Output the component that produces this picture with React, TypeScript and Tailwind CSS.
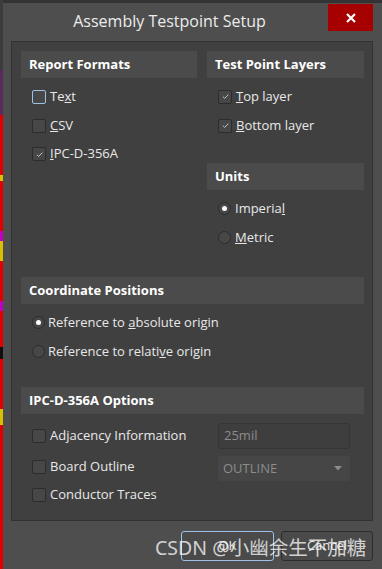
import React from "react";

const font = { fontFamily: '"Open Sans", "Noto Sans", "Noto Sans CJK SC", sans-serif' };

function Check({ checked, focus }: { checked?: boolean; focus?: boolean }) {
  return (
    <div
      className={`w-[14px] h-[14px] rounded-[2px] bg-[#474747] border flex items-center justify-center shrink-0 ${
        focus ? "border-[#9cc3e6]" : "border-[#2c2c2c]"
      }`}
    >
      {checked && (
        <svg width="9" height="9" viewBox="0 0 9 9">
          <path d="M1.8 4.6 L3.7 6.4 L7.4 2.6" stroke="#c4c4c4" strokeWidth="1" fill="none" />
        </svg>
      )}
    </div>
  );
}

function Radio({ on }: { on?: boolean }) {
  return (
    <div className="w-[13px] h-[13px] rounded-full bg-[#474747] border border-[#2c2c2c] flex items-center justify-center shrink-0">
      {on && <div className="w-[5px] h-[5px] rounded-full bg-white" />}
    </div>
  );
}

function Header({ children }: { children: React.ReactNode }) {
  return (
    <div className="h-[27px] bg-[#4b4b4b] flex items-center pl-[8px] text-[13px] font-bold text-white">
      {children}
    </div>
  );
}

export default function App() {
  return (
    <div className="w-[382px] h-[569px] flex bg-[#4e4e4e] overflow-hidden relative" style={font}>
      {/* background app bleeding at left */}
      <div className="w-[3px] h-full flex flex-col">
        <div className="h-[70px] bg-[#3c3c3c]" />
        <div className="h-[45px] bg-[#5a2a5a]" />
        <div className="h-[60px] bg-[#e00000]" />
        <div className="h-[6px] bg-[#d8c000]" />
        <div className="h-[50px] bg-[#e00000]" />
        <div className="h-[10px] bg-[#c000c0]" />
        <div className="h-[20px] bg-[#d8c000]" />
        <div className="h-[40px] bg-[#e00000]" />
        <div className="h-[10px] bg-[#c000c0]" />
        <div className="h-[36px] bg-[#e00000]" />
        <div className="h-[12px] bg-[#101010]" />
        <div className="h-[50px] bg-[#e00000]" />
        <div className="h-[16px] bg-[#d8c000]" />
        <div className="flex-1 bg-[#e00000]" />
      </div>

      <div className="flex-1 flex flex-col border-t-[3px] border-[#333333]">
        {/* title bar */}
        <div className="h-[38px] flex items-start">
          <div className="flex-1 h-[36px] flex items-center justify-center text-[16px] text-[#ececec] pl-[8px]">
            Assembly Testpoint Setup
          </div>
          <div className="w-[45px] h-[27px] mt-[1px] bg-[#a60000] flex items-center justify-center">
            <svg width="10" height="10" viewBox="0 0 10 10">
              <path d="M1 1 L9 9 M9 1 L1 9" stroke="#ffffff" strokeWidth="2.2" />
            </svg>
          </div>
          <div className="w-[9px]" />
        </div>

        {/* panel */}
        <div className="ml-[8px] w-[362px] h-[480px] bg-[#404040] border border-[#323232] pt-[9px] pl-[9px] pr-[8px] flex flex-col text-[13px] text-[#e8e8e8]">
          <div className="h-[226px] flex gap-[10px]">
            {/* left column */}
            <div className="w-[176px] flex flex-col">
              <Header>Report Formats</Header>
              <div className="mt-[4px] flex flex-col pl-[11px]">
                <div className="h-[29px] flex items-center gap-[4px]">
                  <Check focus />
                  <span>
                    Te<u>x</u>t
                  </span>
                </div>
                <div className="h-[29px] flex items-center gap-[4px]">
                  <Check />
                  <span>
                    <u>C</u>SV
                  </span>
                </div>
                <div className="h-[28px] flex items-center gap-[4px]">
                  <Check checked />
                  <span>
                    <u>I</u>PC-D-356A
                  </span>
                </div>
              </div>
            </div>
            {/* right column */}
            <div className="w-[157px] flex flex-col">
              <Header>Test Point Layers</Header>
              <div className="mt-[4px] flex flex-col pl-[11px]">
                <div className="h-[29px] flex items-center gap-[4px]">
                  <Check checked />
                  <span>
                    <u>T</u>op layer
                  </span>
                </div>
                <div className="h-[29px] flex items-center gap-[4px]">
                  <Check checked />
                  <span>
                    <u>B</u>ottom layer
                  </span>
                </div>
              </div>
              <div className="mt-[23px]">
                <Header>Units</Header>
              </div>
              <div className="mt-[4px] flex flex-col pl-[11px]">
                <div className="h-[29px] flex items-center gap-[4px]">
                  <Radio on />
                  <span>
                    Imperia<u>l</u>
                  </span>
                </div>
                <div className="h-[29px] flex items-center gap-[4px]">
                  <Radio />
                  <span>
                    <u>M</u>etric
                  </span>
                </div>
              </div>
            </div>
          </div>

          <Header>Coordinate Positions</Header>
          <div className="mt-[4px] flex flex-col pl-[11px]">
            <div className="h-[29px] flex items-center gap-[3px]">
              <Radio on />
              <span>
                Reference to <u>a</u>bsolute origin
              </span>
            </div>
            <div className="h-[29px] flex items-center gap-[3px]">
              <Radio />
              <span>
                Reference to relati<u>v</u>e origin
              </span>
            </div>
          </div>

          <div className="mt-[21px]">
            <Header>IPC-D-356A Options</Header>
          </div>
          <div className="mt-[9px] flex flex-col pl-[11px]">
            <div className="h-[26px] flex items-center">
              <div className="w-[186px] flex items-center gap-[4px]">
                <Check />
                <span>Adjacency Information</span>
              </div>
              <div className="w-[132px] h-[26px] rounded-[2px] bg-[#3e3e3e] border border-[#363636] flex items-center pl-[5px] text-[#8c8c8c]">
                25mil
              </div>
            </div>
            <div className="mt-[7px] h-[25px] flex items-center">
              <div className="w-[186px] flex items-center gap-[4px] -mt-[3px]">
                <Check />
                <span>Board Outline</span>
              </div>
              <div className="w-[132px] h-[25px] rounded-[2px] bg-[#464646] flex items-center justify-between pl-[5px] pr-[8px] text-[#8c8c8c]">
                <span>OUTLINE</span>
                <svg width="8" height="5" viewBox="0 0 8 5">
                  <path d="M0 0 L8 0 L4 4.5 Z" fill="#8c8c8c" />
                </svg>
              </div>
            </div>
            <div className="h-[27px] flex items-center gap-[4px]">
              <Check />
              <span>Conductor Traces</span>
            </div>
          </div>
        </div>

        {/* buttons */}
        <div className="mt-[10px] flex justify-end gap-[7px] pr-[9px] text-[13px] text-[#e8e8e8]">
          <div className="w-[93px] h-[30px] rounded-[3px] bg-[#4a4a4a] border border-[#9cc3e6] flex items-center justify-center">
            OK
          </div>
          <div className="w-[92px] h-[30px] rounded-[3px] bg-[#4a4a4a] border border-[#2c2c2c] flex items-center justify-center">
            Cancel
          </div>
        </div>
      </div>

      {/* watermark */}
      <div
        className="absolute left-[155px] top-[536px] text-[19.5px] leading-[24px] text-white/75 whitespace-nowrap"
        style={{ fontFamily: '"Noto Sans", "Noto Sans CJK SC", sans-serif' }}
      >
        CSDN @小幽余生不加糖
      </div>
    </div>
  );
}
